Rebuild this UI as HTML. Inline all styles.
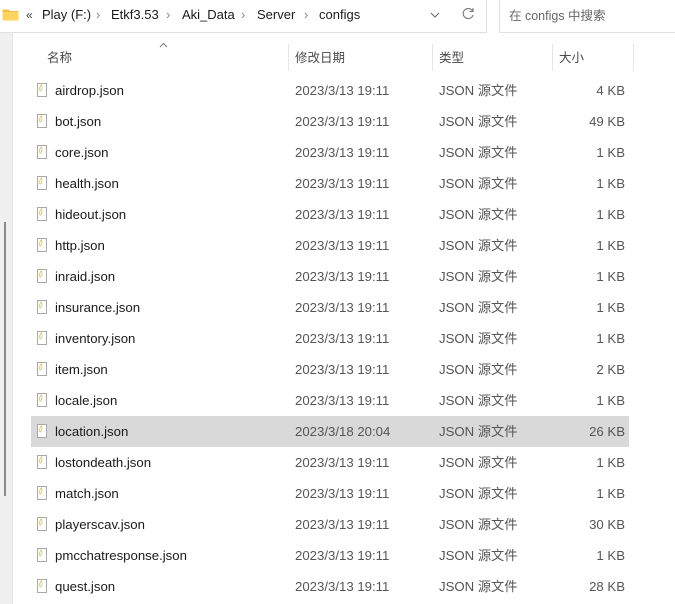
<!DOCTYPE html>
<html><head><meta charset="utf-8"><style>
*{margin:0;padding:0;box-sizing:border-box}
body{width:675px;height:604px;overflow:hidden;background:#fff;font-family:"Liberation Sans","Noto Sans CJK SC",sans-serif;font-size:13.2px;line-height:16px;color:#1a1a1a;position:relative}
.abs{position:absolute;white-space:nowrap;line-height:16px}
.addr{left:-1px;top:-5px;width:488px;height:38px;border:1px solid #e0e0e0;border-top:none}
.search{left:499px;top:-5px;width:180px;height:38px;border:1px solid #e0e0e0;border-top:none}
.crumb{top:7px;font-size:13px;color:#1a1a1a}
.sep{top:7px;font-size:13px;color:#888}
.lp{left:0;top:33px;width:13px;height:571px;background:#f0f0f0;border-right:1px solid #e5e5e5}
.sb{left:4px;top:222px;width:2px;height:274px;background:#8a8a8a}
.hd{top:50px;color:#4a4a4a;font-size:12.5px}
.dv{top:44px;width:1px;height:27px;background:#e5e5e5}
.row{position:absolute;left:31px;width:598px;height:31px}
.row.sel{background:#d9d9d9}
.row span{position:absolute;top:8px;white-space:nowrap;line-height:16px;height:16px}
.n{left:24px;color:#1a1a1a}
.d{left:264px;color:#555}
.t{left:408px;color:#555}
.s{right:4px;color:#555}
.ic{position:absolute;left:6px;top:8px;width:10px;height:14px;border:1px solid #a8a8a8;background:#fff}
.ic:after{content:"()";position:absolute;left:1px;top:1px;font-size:7px;line-height:8px;color:#c8b23a;letter-spacing:-1px}
</style></head><body>
<div class="abs addr"></div>
<div class="abs search"></div>
<svg class="abs" style="left:2px;top:8px" width="17" height="13"><path d="M0.5 1.5h6l1.5 1.5h8.5v9.5h-16z" fill="#f2c04a"/><path d="M0.5 4h16v8.5h-16z" fill="#fcd462"/></svg>
<div class="abs crumb" style="left:26px;font-size:12px;color:#444">«</div>
<div class="abs crumb" style="left:42px">Play (F:)</div>
<div class="abs sep" style="left:96px">›</div>
<div class="abs crumb" style="left:111px">Etkf3.53</div>
<div class="abs sep" style="left:166px">›</div>
<div class="abs crumb" style="left:182px">Aki_Data</div>
<div class="abs sep" style="left:241px">›</div>
<div class="abs crumb" style="left:257px">Server</div>
<div class="abs sep" style="left:304px">›</div>
<div class="abs crumb" style="left:319px">configs</div>
<svg class="abs" style="left:430px;top:12px" width="10" height="7"><path d="M1 1l4 4 4-4" fill="none" stroke="#666" stroke-width="1"/></svg>
<svg class="abs" style="left:461px;top:7px" width="14" height="14"><path d="M11.5 4A5 5 0 1 0 12 8" fill="none" stroke="#777" stroke-width="1.1"/><path d="M12 1v3.5h-3.5" fill="none" stroke="#777" stroke-width="1.1"/></svg>
<div class="abs" style="left:509px;top:8px;color:#666;font-size:12.5px">在 configs 中搜索</div>
<div class="abs lp"></div><div class="abs sb"></div>
<svg class="abs" style="left:159px;top:42px" width="9" height="6"><path d="M1 5l3.5-3.5 3.5 3.5" fill="none" stroke="#777" stroke-width="1"/></svg>
<div class="abs hd" style="left:47px">名称</div>
<div class="abs dv" style="left:288px"></div>
<div class="abs hd" style="left:295px">修改日期</div>
<div class="abs dv" style="left:432px"></div>
<div class="abs hd" style="left:439px">类型</div>
<div class="abs dv" style="left:552px"></div>
<div class="abs hd" style="left:559px">大小</div>
<div class="abs dv" style="left:633px"></div>
<div class="row" style="top:75px"><i class="ic"></i><span class="n">airdrop.json</span><span class="d">2023/3/13 19:11</span><span class="t">JSON 源文件</span><span class="s">4 KB</span></div>
<div class="row" style="top:106px"><i class="ic"></i><span class="n">bot.json</span><span class="d">2023/3/13 19:11</span><span class="t">JSON 源文件</span><span class="s">49 KB</span></div>
<div class="row" style="top:137px"><i class="ic"></i><span class="n">core.json</span><span class="d">2023/3/13 19:11</span><span class="t">JSON 源文件</span><span class="s">1 KB</span></div>
<div class="row" style="top:168px"><i class="ic"></i><span class="n">health.json</span><span class="d">2023/3/13 19:11</span><span class="t">JSON 源文件</span><span class="s">1 KB</span></div>
<div class="row" style="top:199px"><i class="ic"></i><span class="n">hideout.json</span><span class="d">2023/3/13 19:11</span><span class="t">JSON 源文件</span><span class="s">1 KB</span></div>
<div class="row" style="top:230px"><i class="ic"></i><span class="n">http.json</span><span class="d">2023/3/13 19:11</span><span class="t">JSON 源文件</span><span class="s">1 KB</span></div>
<div class="row" style="top:261px"><i class="ic"></i><span class="n">inraid.json</span><span class="d">2023/3/13 19:11</span><span class="t">JSON 源文件</span><span class="s">1 KB</span></div>
<div class="row" style="top:292px"><i class="ic"></i><span class="n">insurance.json</span><span class="d">2023/3/13 19:11</span><span class="t">JSON 源文件</span><span class="s">1 KB</span></div>
<div class="row" style="top:323px"><i class="ic"></i><span class="n">inventory.json</span><span class="d">2023/3/13 19:11</span><span class="t">JSON 源文件</span><span class="s">1 KB</span></div>
<div class="row" style="top:354px"><i class="ic"></i><span class="n">item.json</span><span class="d">2023/3/13 19:11</span><span class="t">JSON 源文件</span><span class="s">2 KB</span></div>
<div class="row" style="top:385px"><i class="ic"></i><span class="n">locale.json</span><span class="d">2023/3/13 19:11</span><span class="t">JSON 源文件</span><span class="s">1 KB</span></div>
<div class="row sel" style="top:416px"><i class="ic"></i><span class="n">location.json</span><span class="d">2023/3/18 20:04</span><span class="t">JSON 源文件</span><span class="s">26 KB</span></div>
<div class="row" style="top:447px"><i class="ic"></i><span class="n">lostondeath.json</span><span class="d">2023/3/13 19:11</span><span class="t">JSON 源文件</span><span class="s">1 KB</span></div>
<div class="row" style="top:478px"><i class="ic"></i><span class="n">match.json</span><span class="d">2023/3/13 19:11</span><span class="t">JSON 源文件</span><span class="s">1 KB</span></div>
<div class="row" style="top:509px"><i class="ic"></i><span class="n">playerscav.json</span><span class="d">2023/3/13 19:11</span><span class="t">JSON 源文件</span><span class="s">30 KB</span></div>
<div class="row" style="top:540px"><i class="ic"></i><span class="n">pmcchatresponse.json</span><span class="d">2023/3/13 19:11</span><span class="t">JSON 源文件</span><span class="s">1 KB</span></div>
<div class="row" style="top:571px"><i class="ic"></i><span class="n">quest.json</span><span class="d">2023/3/13 19:11</span><span class="t">JSON 源文件</span><span class="s">28 KB</span></div>
</body></html>
